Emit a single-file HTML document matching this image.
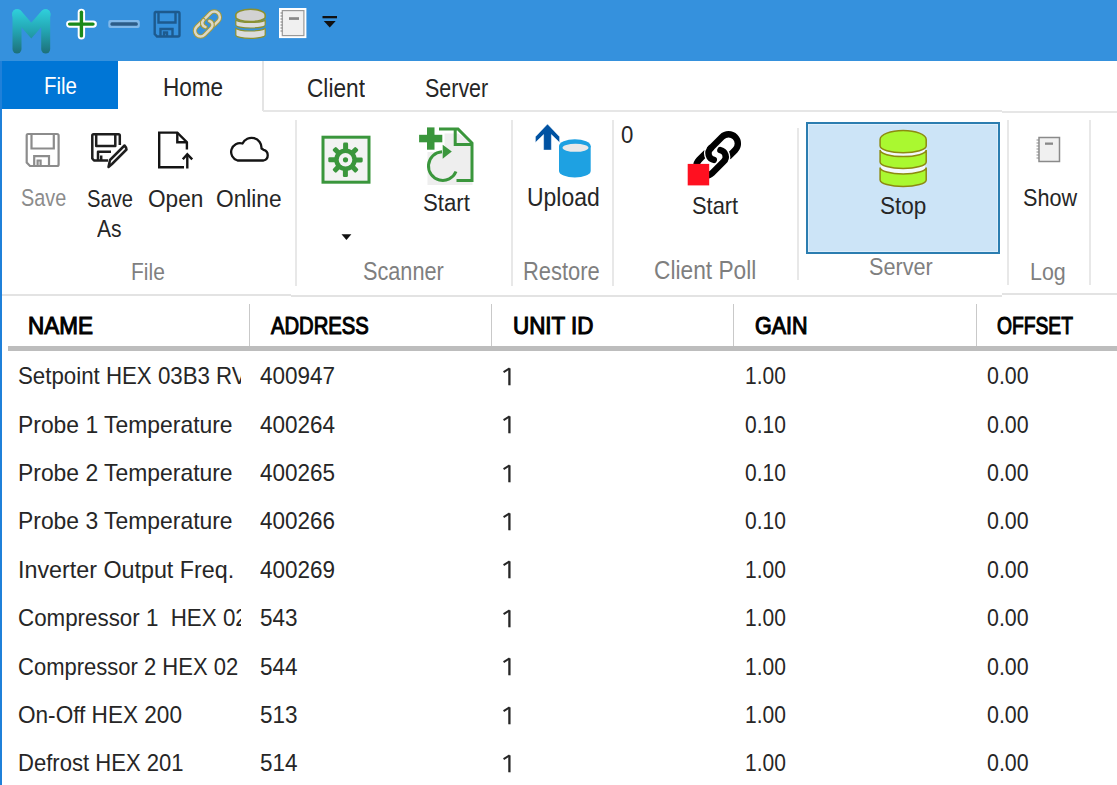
<!DOCTYPE html>
<html><head><meta charset="utf-8">
<style>
html,body{margin:0;padding:0;width:1117px;height:785px;overflow:hidden;background:#fff;font-family:"Liberation Sans",sans-serif;}
.a{position:absolute;}
.t{position:absolute;white-space:nowrap;line-height:1;transform-origin:0 0;}
.clip{position:absolute;overflow:hidden;}
svg{position:absolute;overflow:visible;}
</style></head><body>
<div class="a" style="left:0;top:0;width:1117px;height:61px;background:#3591dd;"></div>
<div class="a" style="left:0;top:61px;width:2px;height:724px;background:#1f80d9;"></div>
<div class="a" style="left:2px;top:61px;width:116px;height:48px;background:#0076d6;"></div>
<div class="a" style="left:262px;top:61px;width:2px;height:50px;background:#e4e4e4;"></div>
<div class="a" style="left:263px;top:110px;width:739px;height:2px;background:#e6e6e6;"></div>
<div class="a" style="left:1002px;top:111px;width:115px;height:2px;background:#e6e6e6;"></div>
<div class="a" style="left:2px;top:294px;width:289px;height:2px;background:#e3e3e3;"></div>
<div class="a" style="left:291px;top:294.6px;width:711px;height:2px;background:#e3e3e3;"></div>
<div class="a" style="left:1002px;top:292.6px;width:115px;height:2px;background:#e3e3e3;"></div>
<!-- ribbon separators -->
<div class="a" style="left:295px;top:120px;width:2px;height:166px;background:#e8e8e8;"></div>
<div class="a" style="left:511px;top:120px;width:2px;height:166px;background:#e8e8e8;"></div>
<div class="a" style="left:612px;top:120px;width:2px;height:166px;background:#e8e8e8;"></div>
<div class="a" style="left:797px;top:128px;width:2px;height:152px;background:#e8e8e8;"></div>
<div class="a" style="left:1007px;top:120px;width:2px;height:165px;background:#e8e8e8;"></div>
<div class="a" style="left:1089px;top:120px;width:2px;height:165px;background:#e8e8e8;"></div>
<!-- stop button -->
<div class="a" style="left:806px;top:122px;width:190px;height:128px;background:#cce4f7;border:2px solid #2b7db0;box-shadow:inset 0 0 0 1px #ddeefc;"></div>
<!-- grid header -->
<div class="a" style="left:249px;top:304px;width:1px;height:42px;background:#c9c9c9;"></div>
<div class="a" style="left:491px;top:304px;width:1px;height:42px;background:#c9c9c9;"></div>
<div class="a" style="left:733px;top:304px;width:1px;height:42px;background:#c9c9c9;"></div>
<div class="a" style="left:976px;top:304px;width:1px;height:42px;background:#c9c9c9;"></div>
<div class="a" style="left:8px;top:346px;width:1109px;height:5px;background:#bdbdbd;"></div>
<svg width="1117" height="785" viewBox="0 0 1117 785" style="left:0;top:0;">
<defs>
<linearGradient id="mg" x1="0" y1="9" x2="0" y2="54" gradientUnits="userSpaceOnUse">
<stop offset="0" stop-color="#2fd0dc"/><stop offset="0.5" stop-color="#23a3b0"/><stop offset="1" stop-color="#1d6f78"/>
</linearGradient>
</defs>
<!-- M logo -->
<g fill="none" stroke="url(#mg)" stroke-width="9">
<path d="M17,49 V13.7" stroke-linecap="round"/><path d="M45.7,49 V13.7" stroke-linecap="round"/>
<path d="M17.3,14.5 L31.3,30.6 L45.4,14.5" stroke-width="10.5" stroke-linecap="round" stroke-linejoin="miter" stroke-miterlimit="10"/>
<circle cx="17" cy="13.5" r="0.1" stroke-linecap="round"/>
</g>
<!-- plus -->
<g stroke="#fff" stroke-width="7.4" stroke-linecap="round">
<line x1="69.8" y1="24.1" x2="93.2" y2="24.1"/><line x1="81.4" y1="12.4" x2="81.4" y2="35.8"/>
</g>
<g stroke="#1a8a1a" stroke-width="3.4" stroke-linecap="round">
<line x1="69.6" y1="24.1" x2="93" y2="24.1"/><line x1="81.4" y1="12.3" x2="81.4" y2="35.9"/>
</g>
<!-- minus -->
<rect x="108.3" y="19.9" width="31.5" height="8.1" rx="2" fill="#7fb8ea"/>
<rect x="110.4" y="22.2" width="27.4" height="3.6" rx="1.5" fill="#2c5c88"/>
<!-- title save -->
<g fill="none" stroke="#1d5a8e" stroke-width="2.4">
<path d="M155,12 H178 Q179.5,12 179.5,13.5 V35 Q179.5,36.5 178,36.5 H157 L154.7,34 V13.5 Q154.7,12 156,12 Z"/>
<path d="M158.5,12 V22.5 H175.5 V12"/>
<path d="M160.5,36.5 V29 H172.5 V36.5"/>
<path d="M164,36.5 V32.5 H167 V36.5"/>
</g>
<!-- title link -->
<g transform="translate(207.4,24) rotate(-45) scale(0.6)" fill="none" stroke-linecap="round">
<path d="M6.6,9.3 L16.2,9.3 A9.3,9.3 0 0 0 16.2,-9.3 L0,-9.3 A6.8,6.8 0 0 0 -5.8,1.2" stroke="#a39a3c" stroke-width="7.4"/><path d="M6.6,9.3 L16.2,9.3 A9.3,9.3 0 0 0 16.2,-9.3 L0,-9.3 A6.8,6.8 0 0 0 -5.8,1.2" stroke="#dcd8c8" stroke-width="4.2"/>
<path d="M-6.6,-9.3 L-16.2,-9.3 A9.3,9.3 0 0 0 -16.2,9.3 L0,9.3 A6.8,6.8 0 0 0 5.8,-1.2" stroke="#a39a3c" stroke-width="7.4"/><path d="M-6.6,-9.3 L-16.2,-9.3 A9.3,9.3 0 0 0 -16.2,9.3 L0,9.3 A6.8,6.8 0 0 0 5.8,-1.2" stroke="#dcd8c8" stroke-width="4.2"/>
<path d="M0,-9.3 A6.8,6.8 0 0 0 -5.8,1.2" stroke="#a39a3c" stroke-width="7.4"/><path d="M0,-9.3 A6.8,6.8 0 0 0 -5.8,1.2" stroke="#dcd8c8" stroke-width="4.2"/>
</g>
<!-- title database -->
<g stroke="#8a9030" stroke-width="1.2">
<path d="M235.8,27.8 A14.7,3.2 0 0 0 265.2,27.8 V35 A14.7,3.4 0 0 1 235.8,35 Z" fill="#dcdcdc"/>
<path d="M235.8,19.5 A14.7,3 0 0 0 265.2,19.5 V25 A14.7,3 0 0 1 235.8,25 Z" fill="#dcdcdc"/>
<path d="M235.8,15 A14.7,5.8 0 0 1 265.2,15 V17 A14.7,4.5 0 0 1 235.8,17 Z" fill="#d2d2d2" stroke-width="1.6"/>
</g>
<!-- title notebook -->
<rect x="279" y="8" width="27.4" height="30.1" fill="#fff"/>
<rect x="282.3" y="10.6" width="21.6" height="25" fill="#f0f0f0" stroke="#999" stroke-width="1.2"/>
<g stroke="#8a8a8a" stroke-width="1.2"><line x1="280.5" y1="13" x2="282.5" y2="13"/><line x1="280.5" y1="16" x2="282.5" y2="16"/><line x1="280.5" y1="19" x2="282.5" y2="19"/><line x1="280.5" y1="22" x2="282.5" y2="22"/><line x1="280.5" y1="25" x2="282.5" y2="25"/><line x1="280.5" y1="28" x2="282.5" y2="28"/><line x1="280.5" y1="31" x2="282.5" y2="31"/></g>
<rect x="289" y="17.2" width="10" height="2.7" fill="#888"/>
<!-- title dropdown -->
<rect x="322.5" y="16" width="14.5" height="2.3" fill="#111"/>
<path d="M323.8,21 H335.7 L329.75,27.4 Z" fill="#111"/>

<!-- ribbon: gray save -->
<g fill="none" stroke="#8c8c8c" stroke-width="2.2">
<path d="M28,134 H57 Q58.6,134 58.6,135.6 V164.5 Q58.6,166 57,166 H30 L26.7,162.5 V135.6 Q26.7,134 28,134 Z"/>
<path d="M31.5,134 V148.5 H53.8 V134"/>
<path d="M34.2,166 V156.2 H49 V166"/>
<path d="M37.6,166 V160.5 H40.6 V166"/>
</g>
<!-- ribbon: save as -->
<g fill="none" stroke="#1e1e1e" stroke-width="2.5" stroke-linejoin="round">
<path d="M108,160.5 H94 L92.3,158.5 V135.5 Q92.3,134.2 93.6,134.2 H118.5 Q119.8,134.2 119.8,135.5 V145"/>
<path d="M96.2,134.2 V146 H115.3 V134.2"/>
<path d="M98,160.5 V151.8 H111"/>
<path d="M101.2,160.5 V155.5"/>
<path d="M108.5,167 L110,160 L124.5,145.5 Q126.3,147.3 126.5,149.5 L112,164 Z"/>
</g>
<!-- ribbon: open -->
<g fill="none" stroke="#141414" stroke-width="2.4" stroke-linecap="butt" stroke-linejoin="miter">
<path d="M184,167.3 H159.2 V132.6 H177.3 L186.9,142.2 V149.5"/>
<path d="M177.3,132.6 V142.2 H186.9"/>
<path d="M187.3,168.5 V154"/>
<path d="M182.8,159.3 L187.3,154.2 L192.2,159.3"/>
</g>
<!-- ribbon: cloud -->
<path d="M237.5,160.5 H263.5 A5.5,5.5 0 0 0 263.5,149.8 L261.5,148.5 A10,10 0 0 0 242.5,143.5 A7.2,7.2 0 0 0 237.5,160.5 Z" fill="none" stroke="#141414" stroke-width="2.3" stroke-linejoin="round"/>

<!-- scanner gear box -->
<rect x="323" y="137.2" width="46" height="45" fill="#f3f3f3" stroke="#3a963c" stroke-width="3"/>
<g transform="translate(345.5,159.8)" fill="#3a963c">
<circle r="11.3"/>
<rect x="-2.4" y="-17.2" width="5" height="9" rx="1.3"/>
<rect x="-2.5" y="-16.3" width="5" height="8" rx="1.3" transform="rotate(45)"/>
<rect x="-2.4" y="-17.2" width="5" height="9" rx="1.3" transform="rotate(90)"/>
<rect x="-2.5" y="-16.3" width="5" height="8" rx="1.3" transform="rotate(135)"/>
<rect x="-2.4" y="-17.2" width="5" height="9" rx="1.3" transform="rotate(180)"/>
<rect x="-2.5" y="-16.3" width="5" height="8" rx="1.3" transform="rotate(225)"/>
<rect x="-2.4" y="-17.2" width="5" height="9" rx="1.3" transform="rotate(270)"/>
<rect x="-2.5" y="-16.3" width="5" height="8" rx="1.3" transform="rotate(315)"/>
<circle r="6.8" fill="#f3f3f3"/>
<circle r="2.6"/>
</g>
<path d="M341.5,234.2 H351.4 L346.45,240 Z" fill="#111"/>

<!-- scanner start icon -->
<path d="M427.5,133.5 H458 L472.5,143.5 V185 H427.5 Z" fill="#eeeeee"/>
<rect x="417" y="125.5" width="27.5" height="26.5" fill="#fff"/>
<g fill="none" stroke="#3a963c" stroke-width="3">
<path d="M439,129 H458 L472,143 V180.5 H456.5"/>
<path d="M455.2,129 V144.4 H472"/>
</g>
<path d="M442,151.8 A14.3,14.3 0 1 0 456,171.5" fill="none" stroke="#3a963c" stroke-width="3"/>
<path d="M442.7,144.8 L451.8,151.6 L442.7,158.8 Z" fill="#3a963c"/>
<g fill="#3a963c"><rect x="427" y="127.4" width="7.5" height="22.3"/><rect x="419.1" y="134.8" width="23.2" height="7.5"/></g>

<!-- upload -->
<path d="M547.5,124 L559.6,136.8 V142.5 L551.4,134.6 V150.1 H543.6 V134.6 L535.4,142.5 V136.8 Z" fill="#0052a2" stroke="#fff" stroke-width="0.8" stroke-opacity="0.6"/>
<path d="M559,146 V171 A15.85,6.5 0 0 0 590.7,171 V146 Z" fill="#1ea1e2"/>
<ellipse cx="574.85" cy="146" rx="15.85" ry="6.8" fill="#1ea1e2"/>
<ellipse cx="575.5" cy="147.8" rx="13" ry="4" fill="#e9e9e9"/>

<!-- client poll chain -->
<g transform="translate(717.1,155) rotate(-45)" fill="none" stroke-width="6.4">
<path d="M6.6,9.3 L16.2,9.3 A9.3,9.3 0 0 0 16.2,-9.3 L0,-9.3 A6.8,6.8 0 0 0 -5.8,1.2" stroke="#000" stroke-linecap="butt"/>
<path d="M-6.6,-9.3 L-16.2,-9.3 A9.3,9.3 0 0 0 -16.2,9.3 L0,9.3 A6.8,6.8 0 0 0 5.8,-1.2" stroke="#fff" stroke-width="9"/>
<path d="M-6.6,-9.3 L-16.2,-9.3 A9.3,9.3 0 0 0 -16.2,9.3 L0,9.3 A6.8,6.8 0 0 0 5.8,-1.2" stroke="#000" stroke-linecap="round"/>
<path d="M0,-9.3 A6.8,6.8 0 0 0 -5.8,1.2" stroke="#fff" stroke-width="9"/>
<path d="M0,-9.3 A6.8,6.8 0 0 0 -5.8,1.2" stroke="#000" stroke-linecap="round"/>
<path d="M-2,-9.3 L2,-9.3" stroke="#000"/>
</g>
<rect x="687.7" y="163.9" width="21.5" height="21.5" fill="#ff1020"/>

<!-- lime database -->
<rect x="881" y="145" width="44" height="36" fill="#f4f8fc"/>
<g stroke="#8c8a10" stroke-width="1.5" fill="#aaf830">
<path d="M880.1,167.5 A23.05,6.5 0 0 0 926.2,167.5 V180 A23.05,6.4 0 0 1 880.1,180 Z"/>
<path d="M880.1,150 A23.05,6.6 0 0 0 926.2,150 V162 A23.05,6.5 0 0 1 880.1,162 Z"/>
<path d="M880.1,139.5 A23.05,9 0 0 1 926.2,139.5 V146 A23.05,6.7 0 0 1 880.1,146 Z"/>
</g>

<!-- log notebook -->
<rect x="1039" y="137.5" width="20.5" height="24" fill="#f0f0f0" stroke="#8a8a8a" stroke-width="1.5"/>
<g stroke="#8a8a8a" stroke-width="1"><line x1="1036.5" y1="140" x2="1039" y2="140"/><line x1="1036.5" y1="143" x2="1039" y2="143"/><line x1="1036.5" y1="146" x2="1039" y2="146"/><line x1="1036.5" y1="149" x2="1039" y2="149"/><line x1="1036.5" y1="152" x2="1039" y2="152"/><line x1="1036.5" y1="155" x2="1039" y2="155"/><line x1="1036.5" y1="158" x2="1039" y2="158"/></g>
<rect x="1045" y="142.5" width="8" height="2.3" fill="#888"/>
</svg>

<div class="t" style="left:44.30px;top:73.58px;font-size:24.71px;color:#ffffff;transform:scaleX(0.8275);">File</div>
<div class="t" style="left:162.50px;top:75.29px;font-size:25.29px;color:#262626;transform:scaleX(0.8922);">Home</div>
<div class="t" style="left:307.30px;top:75.54px;font-size:25.00px;color:#262626;transform:scaleX(0.9062);">Client</div>
<div class="t" style="left:424.80px;top:75.54px;font-size:25.00px;color:#262626;transform:scaleX(0.8583);">Server</div>
<div class="t" style="left:21.00px;top:186.94px;font-size:23.69px;color:#8c8c8c;transform:scaleX(0.8369);">Save</div>
<div class="t" style="left:86.60px;top:186.50px;font-size:23.98px;color:#262626;transform:scaleX(0.8402);">Save</div>
<div class="t" style="left:97.30px;top:216.51px;font-size:24.56px;color:#262626;transform:scaleX(0.8561);">As</div>
<div class="t" style="left:147.70px;top:186.50px;font-size:23.98px;color:#262626;transform:scaleX(0.9430);">Open</div>
<div class="t" style="left:216.30px;top:186.50px;font-size:23.98px;color:#262626;transform:scaleX(0.9468);">Online</div>
<div class="t" style="left:130.60px;top:260.28px;font-size:24.13px;color:#7f7f7f;transform:scaleX(0.8692);">File</div>
<div class="t" style="left:423.00px;top:190.80px;font-size:23.98px;color:#262626;transform:scaleX(0.9261);">Start</div>
<div class="t" style="left:362.70px;top:260.16px;font-size:24.85px;color:#7f7f7f;transform:scaleX(0.8726);">Scanner</div>
<div class="t" style="left:526.70px;top:186.46px;font-size:24.85px;color:#262626;transform:scaleX(0.9236);">Upload</div>
<div class="t" style="left:522.90px;top:260.16px;font-size:24.85px;color:#7f7f7f;transform:scaleX(0.8818);">Restore</div>
<div class="t" style="left:621.00px;top:123.03px;font-size:24.42px;color:#262626;transform:scaleX(0.9091);">0</div>
<div class="t" style="left:691.50px;top:195.39px;font-size:23.40px;color:#262626;transform:scaleX(0.9347);">Start</div>
<div class="t" style="left:653.50px;top:257.82px;font-size:25.73px;color:#7f7f7f;transform:scaleX(0.8836);">Client Poll</div>
<div class="t" style="left:880.00px;top:194.91px;font-size:23.26px;color:#262626;transform:scaleX(0.9696);">Stop</div>
<div class="t" style="left:869.20px;top:255.81px;font-size:23.26px;color:#7f7f7f;transform:scaleX(0.9314);">Server</div>
<div class="t" style="left:1022.80px;top:187.21px;font-size:23.26px;color:#262626;transform:scaleX(0.9305);">Show</div>
<div class="t" style="left:1030.00px;top:259.63px;font-size:24.42px;color:#7f7f7f;transform:scaleX(0.8780);">Log</div>
<div class="t" style="left:28.10px;top:313.63px;font-size:24.42px;color:#000;-webkit-text-stroke:1.1px #000;transform:scaleX(0.9201);">NAME</div>
<div class="t" style="left:271.20px;top:313.63px;font-size:24.42px;color:#000;-webkit-text-stroke:1.1px #000;transform:scaleX(0.8295);">ADDRESS</div>
<div class="t" style="left:512.80px;top:313.63px;font-size:24.42px;color:#000;-webkit-text-stroke:1.1px #000;transform:scaleX(0.9170);">UNIT ID</div>
<div class="t" style="left:755.00px;top:313.63px;font-size:24.42px;color:#000;-webkit-text-stroke:1.1px #000;transform:scaleX(0.8817);">GAIN</div>
<div class="t" style="left:996.90px;top:313.63px;font-size:24.42px;color:#000;-webkit-text-stroke:1.1px #000;transform:scaleX(0.7886);">OFFSET</div>
<div class="clip" style="left:0;top:355.2px;width:241px;height:40px;"><div class="t" style="left:17.50px;top:10.02px;font-size:23.6px;color:#262626;transform:scaleX(0.944);">Setpoint HEX 03B3 RV</div></div>
<div class="t" style="left:260.00px;top:365.22px;font-size:23.6px;color:#262626;transform:scaleX(0.953);">400947</div>
<svg width="12" height="22" viewBox="0 0 12 22" style="left:503px;top:366.70px;"><path d="M6.4,1.3 V18.3" stroke="#262626" stroke-width="2.3" fill="none"/><path d="M0.6,5.2 L6.6,1.4" stroke="#262626" stroke-width="2" fill="none"/></svg>
<div class="t" style="left:745.00px;top:365.22px;font-size:23.6px;color:#262626;transform:scaleX(0.89);">1.00</div>
<div class="t" style="left:987.00px;top:365.22px;font-size:23.6px;color:#262626;transform:scaleX(0.905);">0.00</div>
<div class="clip" style="left:0;top:403.6px;width:241px;height:40px;"><div class="t" style="left:17.50px;top:10.02px;font-size:23.6px;color:#262626;transform:scaleX(0.97);">Probe 1 Temperature</div></div>
<div class="t" style="left:260.00px;top:413.62px;font-size:23.6px;color:#262626;transform:scaleX(0.953);">400264</div>
<svg width="12" height="22" viewBox="0 0 12 22" style="left:503px;top:415.10px;"><path d="M6.4,1.3 V18.3" stroke="#262626" stroke-width="2.3" fill="none"/><path d="M0.6,5.2 L6.6,1.4" stroke="#262626" stroke-width="2" fill="none"/></svg>
<div class="t" style="left:745.00px;top:413.62px;font-size:23.6px;color:#262626;transform:scaleX(0.89);">0.10</div>
<div class="t" style="left:987.00px;top:413.62px;font-size:23.6px;color:#262626;transform:scaleX(0.905);">0.00</div>
<div class="clip" style="left:0;top:452.0px;width:241px;height:40px;"><div class="t" style="left:17.50px;top:10.02px;font-size:23.6px;color:#262626;transform:scaleX(0.97);">Probe 2 Temperature</div></div>
<div class="t" style="left:260.00px;top:462.02px;font-size:23.6px;color:#262626;transform:scaleX(0.953);">400265</div>
<svg width="12" height="22" viewBox="0 0 12 22" style="left:503px;top:463.50px;"><path d="M6.4,1.3 V18.3" stroke="#262626" stroke-width="2.3" fill="none"/><path d="M0.6,5.2 L6.6,1.4" stroke="#262626" stroke-width="2" fill="none"/></svg>
<div class="t" style="left:745.00px;top:462.02px;font-size:23.6px;color:#262626;transform:scaleX(0.89);">0.10</div>
<div class="t" style="left:987.00px;top:462.02px;font-size:23.6px;color:#262626;transform:scaleX(0.905);">0.00</div>
<div class="clip" style="left:0;top:500.4px;width:241px;height:40px;"><div class="t" style="left:17.50px;top:10.02px;font-size:23.6px;color:#262626;transform:scaleX(0.97);">Probe 3 Temperature</div></div>
<div class="t" style="left:260.00px;top:510.42px;font-size:23.6px;color:#262626;transform:scaleX(0.953);">400266</div>
<svg width="12" height="22" viewBox="0 0 12 22" style="left:503px;top:511.90px;"><path d="M6.4,1.3 V18.3" stroke="#262626" stroke-width="2.3" fill="none"/><path d="M0.6,5.2 L6.6,1.4" stroke="#262626" stroke-width="2" fill="none"/></svg>
<div class="t" style="left:745.00px;top:510.42px;font-size:23.6px;color:#262626;transform:scaleX(0.89);">0.10</div>
<div class="t" style="left:987.00px;top:510.42px;font-size:23.6px;color:#262626;transform:scaleX(0.905);">0.00</div>
<div class="clip" style="left:0;top:548.8px;width:241px;height:40px;"><div class="t" style="left:17.50px;top:10.02px;font-size:23.6px;color:#262626;transform:scaleX(0.987);">Inverter Output Freq.</div></div>
<div class="t" style="left:260.00px;top:558.82px;font-size:23.6px;color:#262626;transform:scaleX(0.953);">400269</div>
<svg width="12" height="22" viewBox="0 0 12 22" style="left:503px;top:560.30px;"><path d="M6.4,1.3 V18.3" stroke="#262626" stroke-width="2.3" fill="none"/><path d="M0.6,5.2 L6.6,1.4" stroke="#262626" stroke-width="2" fill="none"/></svg>
<div class="t" style="left:745.00px;top:558.82px;font-size:23.6px;color:#262626;transform:scaleX(0.89);">1.00</div>
<div class="t" style="left:987.00px;top:558.82px;font-size:23.6px;color:#262626;transform:scaleX(0.905);">0.00</div>
<div class="clip" style="left:0;top:597.2px;width:241px;height:40px;"><div class="t" style="left:17.50px;top:10.02px;font-size:23.6px;color:#262626;transform:scaleX(0.947);">Compressor 1&nbsp; HEX 02</div></div>
<div class="t" style="left:260.00px;top:607.22px;font-size:23.6px;color:#262626;transform:scaleX(0.953);">543</div>
<svg width="12" height="22" viewBox="0 0 12 22" style="left:503px;top:608.70px;"><path d="M6.4,1.3 V18.3" stroke="#262626" stroke-width="2.3" fill="none"/><path d="M0.6,5.2 L6.6,1.4" stroke="#262626" stroke-width="2" fill="none"/></svg>
<div class="t" style="left:745.00px;top:607.22px;font-size:23.6px;color:#262626;transform:scaleX(0.89);">1.00</div>
<div class="t" style="left:987.00px;top:607.22px;font-size:23.6px;color:#262626;transform:scaleX(0.905);">0.00</div>
<div class="clip" style="left:0;top:645.6px;width:241px;height:40px;"><div class="t" style="left:17.50px;top:10.02px;font-size:23.6px;color:#262626;transform:scaleX(0.933);">Compressor 2 HEX 02</div></div>
<div class="t" style="left:260.00px;top:655.62px;font-size:23.6px;color:#262626;transform:scaleX(0.953);">544</div>
<svg width="12" height="22" viewBox="0 0 12 22" style="left:503px;top:657.10px;"><path d="M6.4,1.3 V18.3" stroke="#262626" stroke-width="2.3" fill="none"/><path d="M0.6,5.2 L6.6,1.4" stroke="#262626" stroke-width="2" fill="none"/></svg>
<div class="t" style="left:745.00px;top:655.62px;font-size:23.6px;color:#262626;transform:scaleX(0.89);">1.00</div>
<div class="t" style="left:987.00px;top:655.62px;font-size:23.6px;color:#262626;transform:scaleX(0.905);">0.00</div>
<div class="clip" style="left:0;top:694.0px;width:241px;height:40px;"><div class="t" style="left:17.50px;top:10.02px;font-size:23.6px;color:#262626;transform:scaleX(0.957);">On-Off HEX 200</div></div>
<div class="t" style="left:260.00px;top:704.02px;font-size:23.6px;color:#262626;transform:scaleX(0.953);">513</div>
<svg width="12" height="22" viewBox="0 0 12 22" style="left:503px;top:705.50px;"><path d="M6.4,1.3 V18.3" stroke="#262626" stroke-width="2.3" fill="none"/><path d="M0.6,5.2 L6.6,1.4" stroke="#262626" stroke-width="2" fill="none"/></svg>
<div class="t" style="left:745.00px;top:704.02px;font-size:23.6px;color:#262626;transform:scaleX(0.89);">1.00</div>
<div class="t" style="left:987.00px;top:704.02px;font-size:23.6px;color:#262626;transform:scaleX(0.905);">0.00</div>
<div class="clip" style="left:0;top:742.4px;width:241px;height:40px;"><div class="t" style="left:17.50px;top:10.02px;font-size:23.6px;color:#262626;transform:scaleX(0.935);">Defrost HEX 201</div></div>
<div class="t" style="left:260.00px;top:752.42px;font-size:23.6px;color:#262626;transform:scaleX(0.953);">514</div>
<svg width="12" height="22" viewBox="0 0 12 22" style="left:503px;top:753.90px;"><path d="M6.4,1.3 V18.3" stroke="#262626" stroke-width="2.3" fill="none"/><path d="M0.6,5.2 L6.6,1.4" stroke="#262626" stroke-width="2" fill="none"/></svg>
<div class="t" style="left:745.00px;top:752.42px;font-size:23.6px;color:#262626;transform:scaleX(0.89);">1.00</div>
<div class="t" style="left:987.00px;top:752.42px;font-size:23.6px;color:#262626;transform:scaleX(0.905);">0.00</div>
</body></html>
